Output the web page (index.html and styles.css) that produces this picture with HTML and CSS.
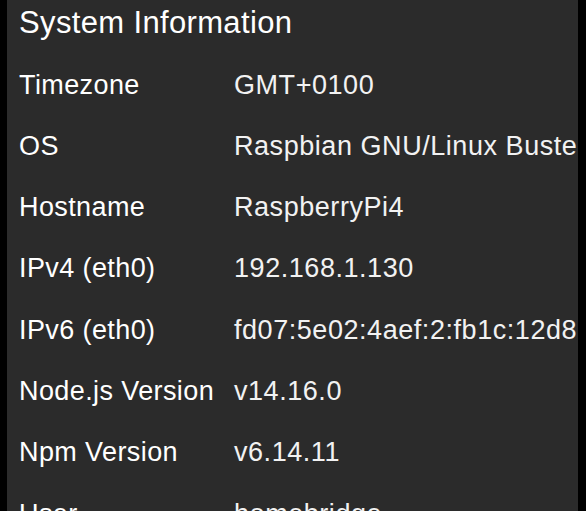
FILE: index.html
```html
<!DOCTYPE html>
<html>
<head>
<meta charset="utf-8">
<link rel="stylesheet" href="styles.css">
</head>
<body>
<div class="panel">
  <h1 class="title">System Information</h1>
  <div class="info">
    <div class="label">Timezone</div><div class="value">GMT+0100</div>
    <div class="label">OS</div><div class="value">Raspbian GNU/Linux Buster</div>
    <div class="label">Hostname</div><div class="value">RaspberryPi4</div>
    <div class="label">IPv4 (eth0)</div><div class="value">192.168.1.130</div>
    <div class="label">IPv6 (eth0)</div><div class="value">fd07:5e02:4aef:2:fb1c:12d8</div>
    <div class="label">Node.js Version</div><div class="value">v14.16.0</div>
    <div class="label">Npm Version</div><div class="value">v6.14.11</div>
    <div class="label">User</div><div class="value">homebridge</div>
  </div>
</div>
</body>
</html>
```
FILE: styles.css
```css
html, body {
  margin: 0;
  padding: 0;
  background: #000;
  height: 100%;
  overflow: hidden;
}
.panel {
  margin-left: 7px;
  width: 571px;
  height: 100%;
  box-sizing: border-box;
  background: #2b2b2b;
  padding-left: 12px;
  overflow: hidden;
  font-family: "Liberation Sans", Arial, sans-serif;
  color: #fff;
}
.title {
  margin: 0 0 11.5px 0;
  padding-top: 3px;
  font-size: 31px;
  font-weight: normal;
  letter-spacing: 0.35px;
  line-height: 40px;
  white-space: nowrap;
}
.info {
  display: grid;
  grid-template-columns: 215px auto;
  grid-auto-rows: 61.33px;
  font-size: 27px;
  line-height: 61.33px;
  white-space: nowrap;
}
.label {
  letter-spacing: 0.4px;
}
.value {
  color: #f2f2f2;
  letter-spacing: 0.55px;
}
```
